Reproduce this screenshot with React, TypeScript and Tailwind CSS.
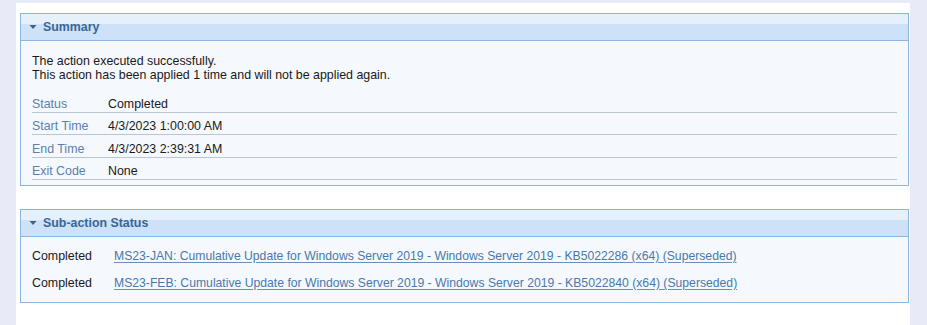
import type { ReactNode } from 'react';

const rows = [
  { label: 'Status', value: 'Completed' },
  { label: 'Start Time', value: '4/3/2023 1:00:00 AM' },
  { label: 'End Time', value: '4/3/2023 2:39:31 AM' },
  { label: 'Exit Code', value: 'None' },
];

const subActions = [
  {
    status: 'Completed',
    title:
      'MS23-JAN: Cumulative Update for Windows Server 2019 - Windows Server 2019 - KB5022286 (x64) (Superseded)',
  },
  {
    status: 'Completed',
    title:
      'MS23-FEB: Cumulative Update for Windows Server 2019 - Windows Server 2019 - KB5022840 (x64) (Superseded)',
  },
];

function Panel({ title, children }: { title: string; children: ReactNode }) {
  return (
    <section className="border border-[#8ab7df] bg-[#f5f8fd]">
      {/* Header con degradado */}
      <div className="flex h-[27px] items-center gap-[6px] border-b border-[#8ab7df] bg-gradient-to-b from-[#e6f0fb] from-40% to-[#cde1f8] to-40% pl-[8px]">
        <svg width="8" height="6" viewBox="0 0 8 6" aria-hidden>
          <path d="M0.5 1 L7.5 1 L4 5 Z" fill="#44607f" />
        </svg>
        <span className="text-[12.4px] font-bold text-[#3a6795]">{title}</span>
      </div>
      {children}
    </section>
  );
}

export default function App() {
  return (
    <div className="h-[325px] w-[927px] bg-[#e8eaf7] pl-[16px] pt-[3px] font-['Liberation_Sans',Arial,sans-serif] text-[12.4px] text-[#1a1a1a]">
      <div className="h-full w-[894px] bg-white pl-[4px] pr-[1px] pt-[10px]">
        <Panel title="Summary">
          <div className="px-[11px] pb-[5px] pt-[13px]">
            <p className="leading-[14px]">The action executed successfully.</p>
            <p className="leading-[14px]">
              This action has been applied 1 time and will not be applied again.
            </p>
            <div className="mt-[8px]">
              {rows.map((r) => (
                <div
                  key={r.label}
                  className="flex h-[22.5px] items-end border-b border-[#b9c6d6] pb-[1px] leading-[14px]"
                >
                  <span className="w-[76px] text-[#5b80ad]">{r.label}</span>
                  <span>{r.value}</span>
                </div>
              ))}
            </div>
          </div>
        </Panel>

        <div className="mt-[23px]">
          <Panel title="Sub-action Status">
            <div className="px-[11px] pb-[6px] pt-[5px]">
              {subActions.map((s) => (
                <div key={s.title} className="flex h-[27px] items-center leading-[14px]">
                  <span className="w-[82px]">{s.status}</span>
                  <a
                    href="#"
                    className="text-[12.2px] text-[#4a78ab] underline decoration-[#6b8fb8] underline-offset-[2px]"
                  >
                    {s.title}
                  </a>
                </div>
              ))}
            </div>
          </Panel>
        </div>
      </div>
    </div>
  );
}
